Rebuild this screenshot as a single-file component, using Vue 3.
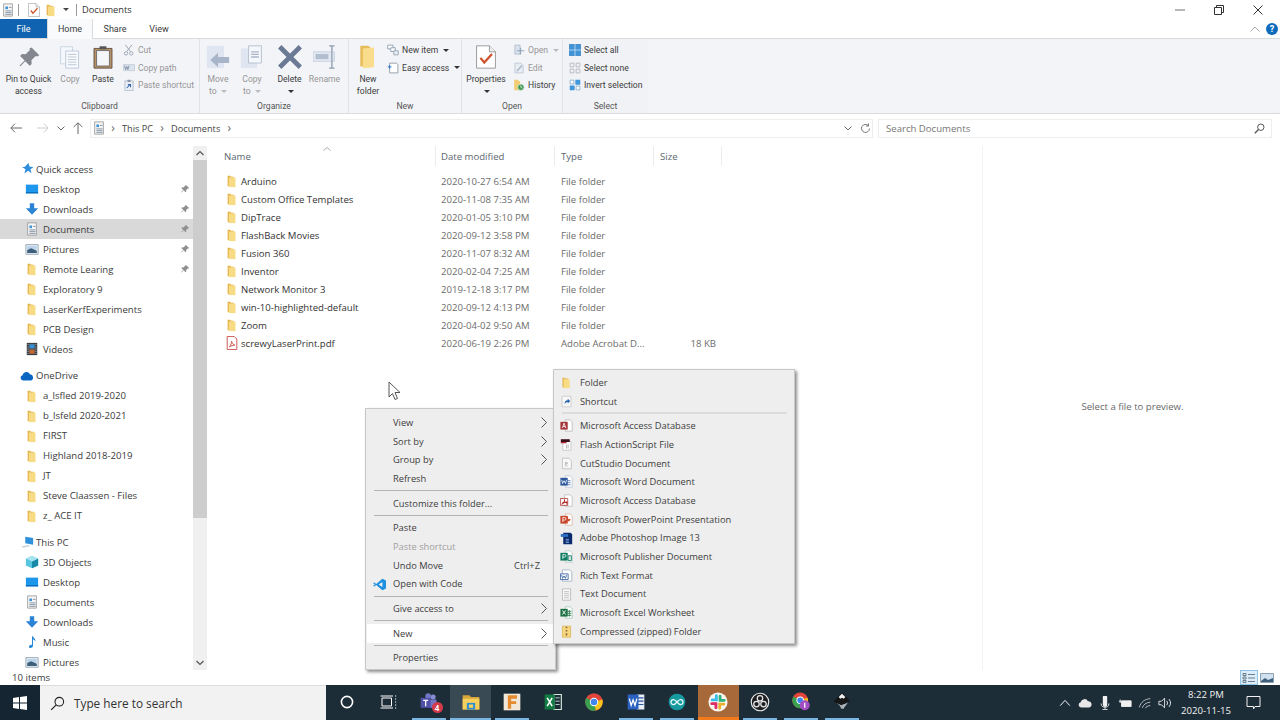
<script setup>
const clipSmall = [
  { icon: 'cut', label: 'Cut' },
  { icon: 'copypath', label: 'Copy path' },
  { icon: 'pasteshort', label: 'Paste shortcut' }
];
const newSmall = [
  { icon: 'newitem', label: 'New item', caret: true },
  { icon: 'easy', label: 'Easy access', caret: true }
];
const openSmall = [
  { icon: 'openfile', label: 'Open', caret: true, off: true },
  { icon: 'edit', label: 'Edit', off: true },
  { icon: 'history', label: 'History' }
];
const selectSmall = [
  { icon: 'selall', label: 'Select all' },
  { icon: 'selnone', label: 'Select none' },
  { icon: 'selinv', label: 'Invert selection' }
];

const navGroups = [
  [
    { label: 'Quick access', icon: 'star', top: true },
    { label: 'Desktop', icon: 'desktop', pin: true },
    { label: 'Downloads', icon: 'down', pin: true },
    { label: 'Documents', icon: 'docs', pin: true, selected: true },
    { label: 'Pictures', icon: 'pics', pin: true },
    { label: 'Remote Learing', icon: 'folder', pin: true },
    { label: 'Exploratory 9', icon: 'folder' },
    { label: 'LaserKerfExperiments', icon: 'folder' },
    { label: 'PCB Design', icon: 'folder' },
    { label: 'Videos', icon: 'film' }
  ],
  [
    { label: 'OneDrive', icon: 'cloud', top: true },
    { label: 'a_lsfled 2019-2020', icon: 'folder' },
    { label: 'b_lsfeld 2020-2021', icon: 'folder' },
    { label: 'FIRST', icon: 'folder' },
    { label: 'Highland 2018-2019', icon: 'folder' },
    { label: 'JT', icon: 'folder' },
    { label: 'Steve Claassen - Files', icon: 'folder' },
    { label: 'z_ ACE IT', icon: 'folder' }
  ],
  [
    { label: 'This PC', icon: 'pc', top: true },
    { label: '3D Objects', icon: 'cube' },
    { label: 'Desktop', icon: 'desktop' },
    { label: 'Documents', icon: 'docs' },
    { label: 'Downloads', icon: 'down' },
    { label: 'Music', icon: 'music' },
    { label: 'Pictures', icon: 'pics' }
  ]
];

const files = [
  { name: 'Arduino', date: '2020-10-27 6:54 AM' },
  { name: 'Custom Office Templates', date: '2020-11-08 7:35 AM' },
  { name: 'DipTrace', date: '2020-01-05 3:10 PM' },
  { name: 'FlashBack Movies', date: '2020-09-12 3:58 PM' },
  { name: 'Fusion 360', date: '2020-11-07 8:32 AM' },
  { name: 'Inventor', date: '2020-02-04 7:25 AM' },
  { name: 'Network Monitor 3', date: '2019-12-18 3:17 PM' },
  { name: 'win-10-highlighted-default', date: '2020-09-12 4:13 PM' },
  { name: 'Zoom', date: '2020-04-02 9:50 AM' },
  { name: 'screwyLaserPrint.pdf', date: '2020-06-19 2:26 PM', type: 'Adobe Acrobat D...', size: '18 KB', icon: 'pdf' }
];

const ctxMenu = [
  { label: 'View', arrow: true },
  { label: 'Sort by', arrow: true },
  { label: 'Group by', arrow: true },
  { label: 'Refresh' },
  { sep: true },
  { label: 'Customize this folder...' },
  { sep: true },
  { label: 'Paste' },
  { label: 'Paste shortcut', off: true },
  { label: 'Undo Move', key: 'Ctrl+Z' },
  { label: 'Open with Code', icon: 'vscode' },
  { sep: true },
  { label: 'Give access to', arrow: true },
  { sep: true },
  { label: 'New', arrow: true, active: true },
  { sep: true },
  { label: 'Properties' }
];

const newMenu = [
  { label: 'Folder', icon: 'folder' },
  { label: 'Shortcut', icon: 'shortcut' },
  { sep: true },
  { label: 'Microsoft Access Database', icon: 'access' },
  { label: 'Flash ActionScript File', icon: 'flash' },
  { label: 'CutStudio Document', icon: 'cutstudio' },
  { label: 'Microsoft Word Document', icon: 'word' },
  { label: 'Microsoft Access Database', icon: 'acrobat' },
  { label: 'Microsoft PowerPoint Presentation', icon: 'ppt' },
  { label: 'Adobe Photoshop Image 13', icon: 'psd' },
  { label: 'Microsoft Publisher Document', icon: 'pub' },
  { label: 'Rich Text Format', icon: 'rtf' },
  { label: 'Text Document', icon: 'txt' },
  { label: 'Microsoft Excel Worksheet', icon: 'xls' },
  { label: 'Compressed (zipped) Folder', icon: 'zip' }
];

const taskApps = [
  { icon: 'tb-cortana' },
  { icon: 'tb-taskview' },
  { icon: 'tb-teams', run: true, badge: '4' },
  { icon: 'tb-explorer', run: true, active: true },
  { icon: 'tb-fusion', run: true },
  { icon: 'tb-excel' },
  { icon: 'tb-chrome' },
  { icon: 'tb-word', run: true },
  { icon: 'tb-arduino', run: true },
  { icon: 'tb-slack', flash: true },
  { icon: 'tb-obs', run: true },
  { icon: 'tb-chrome2', run: true },
  { icon: 'tb-inkscape', run: true }
];

const trayIcons = ['tr-up', 'tr-cloud', 'tr-mic', 'tr-batt', 'tr-wifi', 'tr-vol'];
</script>

<template>
  <div class="desk">
    <!-- icon sprite -->
    <svg class="sprite" aria-hidden="true">
      <symbol id="folder" viewBox="0 0 16 16"><path d="M3 2h3l1 1h3v11H3z" fill="#e6b650"/><path d="M4.500 4H12v11H4.500z" fill="#f8dc85"/></symbol>
      <symbol id="star" viewBox="0 0 16 16"><path d="M9.500 1l1.600 4.400 4.400.3-3.500 2.700 1.200 4.500L9.400 10 5 13l1.300-4.600L2.600 6l-2 .3 5-1z" fill="#2f8fdc"/></symbol>
      <symbol id="desktop" viewBox="0 0 16 16"><path d="M1 3h14v10H1z" fill="#1e96ec"/><path d="M1 11.500h14V13H1z" fill="#0d6cb8"/></symbol>
      <symbol id="down" viewBox="0 0 16 16"><path d="M5.500 1.500h5V7H15l-7 7.500L1 7h4.500z" fill="#2a83d4"/></symbol>
      <symbol id="docs" viewBox="0 0 16 16"><path d="M3 1h10v14H3z" fill="#f6f6f6" stroke="#9a9a9a"/><path d="M5 4h3v3H5z" fill="#3e93d6"/><path d="M9 5h3M5 9h7M5 11h7M5 13h7" stroke="#7a8a9a"/></symbol>
      <symbol id="pics" viewBox="0 0 16 16"><path d="M1 3h14v11H1z" fill="#eef2f6" stroke="#8ea0b0"/><path d="M2.500 4.500h11V9h-11z" fill="#bcd4ea"/><path d="M2.500 12.500V9L7 7l6.500 3v2.500z" fill="#3d5f7c"/></symbol>
      <symbol id="film" viewBox="0 0 16 16"><path d="M2 1h12v14H2z" fill="#3a3f46"/><path d="M5 2.500h6v5H5z" fill="#3f8ed0"/><path d="M5 8.500h6v5H5z" fill="#c06a3a"/><path d="M3 2.500h1v1H3zM3 5h1v1H3zM3 7.500h1v1H3zM3 10h1v1H3zM3 12.500h1v1H3zM12 2.500h1v1h-1zM12 5h1v1h-1zM12 7.500h1v1h-1zM12 10h1v1h-1zM12 12.500h1v1h-1z" fill="#ddd"/></symbol>
      <symbol id="cloud" viewBox="0 0 16 16"><path d="M3.500 13a3 3 0 0 1-.6-5.900A4.500 4.500 0 0 1 11.400 6a3.600 3.600 0 0 1 1.100 7z" fill="#0a64c2"/></symbol>
      <symbol id="pc" viewBox="0 0 16 16"><path d="M6 2l9 1.500V11L6 9.500z" fill="#2f90dc"/><path d="M1 13.500l8-2 3 1-8 2z" fill="#c9d3dc"/></symbol>
      <symbol id="cube" viewBox="0 0 16 16"><path d="M8 1l7 3v8l-7 3-7-3V4z" fill="#58c6de"/><path d="M8 7.500V15l7-3V4z" fill="#1788a8"/><path d="M1 4l7 3.500L15 4 8 1z" fill="#a7e4ef"/></symbol>
      <symbol id="music" viewBox="0 0 16 16"><path d="M8 1.500h1.200c.4 2 3.200 2.800 2.800 6-.6-1.600-1.700-2.300-2.800-2.500V12c0 1.700-1.400 2.800-3 2.800-1 0-1.700-.6-1.700-1.500 0-1.300 1.600-2.400 3.500-2.200z" fill="#2a8ad8"/></symbol>
      <symbol id="pin" viewBox="0 0 16 16"><path d="M9.500 1.500l5 5-1 .8-1-.3-2.700 2.700.2 2.300-1.200 1.100L5.900 10 2.500 13.500l-.6-.6 3.400-3.500-3.100-3 1.100-1.200 2.300.2L8.300 2.700 8.100 2.200z" fill="#8f8f8f"/></symbol>
      <symbol id="pdf" viewBox="0 0 16 16"><path d="M2.500.5h8l3 3v12h-11z" fill="#fff" stroke="#c9453e"/><path d="M5 12.500c2-2 2.500-5 2.500-6.500 1 2.500 2 4 3.800 4.500-2.300 0-4.300.7-6.300 2z" fill="none" stroke="#c9453e"/></symbol>

      <symbol id="bigpin" viewBox="0 0 28 28"><path d="M17 3l9 9-2.400 1.400-1.800-.6-5 5 .3 4.300-2.200 2.200-5.300-5.300L4 24.900l-1-1 5.900-5.900-5.300-5.300 2.200-2.200 4.300.3 5-5-.6-1.800z" fill="#85878e"/></symbol>
      <symbol id="bigcopy" viewBox="0 0 28 28"><path d="M3 2h14v20H3z" fill="#f4f7fb" stroke="#c5d2e2"/><path d="M9 7h15v20H9z" fill="#f8fafd" stroke="#b5c5d8"/><path d="M11.500 11h10M11.500 14h10M11.500 17h10M11.500 20h10M11.500 23h10" stroke="#b4c1d2"/></symbol>
      <symbol id="bigpaste" viewBox="0 0 28 28"><path d="M3.500 4h21v23h-21z" fill="#b69067" stroke="#5a4a3a"/><path d="M6.500 6.500h15v18h-15z" fill="#f4f6fa" stroke="#666"/><path d="M10 1.500h8V5h-8z" fill="#555"/></symbol>
      <symbol id="bigmove" viewBox="0 0 28 28"><path d="M1 1h20v26H1z" fill="#dfe6f2"/><path d="M14 9v5h13v7H14v5L5 17.500z" fill="#a8b5c9"/></symbol>
      <symbol id="bigcopyto" viewBox="0 0 28 28"><path d="M1 4h19v23H1z" fill="#dfe6f2"/><path d="M10 1h15v20H10z" fill="#f4f7fb" stroke="#b0bccd"/><path d="M13 8h9M13 11h9M13 14h9" stroke="#aab6c8" stroke-width="1.500"/></symbol>
      <symbol id="bigdelete" viewBox="0 0 28 28"><path d="M2 2l24 24M26 2L2 26" stroke="#6a7a94" stroke-width="5.500"/></symbol>
      <symbol id="bigrename" viewBox="0 0 28 28"><path d="M0 8h25v11H0z" fill="#e3e9f3" stroke="#c3cede"/><path d="M3 10.500h15v6H3z" fill="#b3bfd0"/><path d="M19 1h6M19 27h6M22 1v26" stroke="#a3aebf" stroke-width="2" fill="none"/></symbol>
      <symbol id="bignew" viewBox="0 0 28 28"><path d="M5 1h9l3 2v22H5z" fill="#e7bd5c"/><path d="M8 4l13-1v23l-13 1z" fill="#f9dd8c"/></symbol>
      <symbol id="bigprops" viewBox="0 0 28 28"><path d="M3 1h15l7 7v19H3z" fill="#fff" stroke="#8c8c8c"/><path d="M18 1v7h7" fill="#eee" stroke="#8c8c8c"/><path d="M7.500 15l4.500 5.500L21 10.500" fill="none" stroke="#d0522a" stroke-width="2.600"/></symbol>

      <symbol id="cut" viewBox="0 0 16 16"><path d="M3 1l7 9M12 1L5 10" stroke="#9aa4b3" stroke-width="1.300"/><circle cx="4" cy="12.500" r="2.300" fill="none" stroke="#9aa4b3" stroke-width="1.200"/><circle cx="11" cy="12.500" r="2.300" fill="none" stroke="#9aa4b3" stroke-width="1.200"/></symbol>
      <symbol id="copypath" viewBox="0 0 16 16"><path d="M.500 3.500h15v8H.500z" fill="#dbe3ef" stroke="#bcc7d6"/><path d="M2 5l1.500 5L5 6l1.500 4L8 5" fill="none" stroke="#6d7b90"/></symbol>
      <symbol id="pasteshort" viewBox="0 0 16 16"><path d="M2.500 2.500h11v13h-11z" fill="#e9eef6" stroke="#a8b4c6"/><path d="M6 1h4v3H6z" fill="#8794a7"/><path d="M5 12l4-4M6.500 7.500H10V11" stroke="#3866ae" stroke-width="1.400" fill="none"/></symbol>
      <symbol id="newitem" viewBox="0 0 16 16"><path d="M1 1.500h7v5H1z" fill="#fff" stroke="#7a8da6"/><path d="M5 5h6v5H5z" fill="#fff" stroke="#7a8da6"/><path d="M9 9h6v5.500H9z" fill="#e8edf3" stroke="#8a98a8"/></symbol>
      <symbol id="easy" viewBox="0 0 16 16"><path d="M3.500 1.500h9l2 2v11h-11z" fill="#fff" stroke="#7c8794"/><path d="M1 6.500h5M3.500 4v5" stroke="#2a78c2" stroke-width="1.300"/></symbol>
      <symbol id="openfile" viewBox="0 0 16 16"><path d="M2.500 1.500h7v12h-7z" fill="#d9e2ee" stroke="#a9b6c7"/><path d="M5 9h10M10 5v9" stroke="#96a7bd" stroke-width="1.600"/></symbol>
      <symbol id="edit" viewBox="0 0 16 16"><path d="M2.500 1.500h8l3 3v10h-11z" fill="#e8edf4" stroke="#b4c0cf"/><path d="M5 11l6-7 1.500 1.200-6 7-2 .5z" fill="#a9b8ca"/></symbol>
      <symbol id="history" viewBox="0 0 16 16"><path d="M1.500 1h5l1 1.500h2V15h-8z" fill="#f2cd72"/><circle cx="10.500" cy="11" r="4.300" fill="#3f9a52" stroke="#eee"/><path d="M10.500 8.500V11l1.800 1.200" stroke="#fff" fill="none"/></symbol>
      <symbol id="selall" viewBox="0 0 16 16"><path d="M.500.500h15v15H.500z" fill="#3f93d6" stroke="#2f7fc0"/><path d="M8 0v16M0 8h16" stroke="#cfe4f5"/></symbol>
      <symbol id="selnone" viewBox="0 0 16 16"><path d="M1.500 1.500h5v5h-5zM9.500 1.500h5v5h-5zM1.500 9.500h5v5h-5zM9.500 9.500h5v5h-5z" fill="none" stroke="#a9aeb6"/></symbol>
      <symbol id="selinv" viewBox="0 0 16 16"><path d="M1.500 1.500h5v5h-5zM9.500 9.500h5v5h-5z" fill="#fff" stroke="#7fa6cc"/><path d="M8.500 1h6.500v6.500H8.500zM1 8.500h6.500V15H1z" fill="#4197da"/></symbol>

      <symbol id="vscode" viewBox="0 0 16 16"><path d="M11.500 1L16 3v10l-4.500 2L4 8.500 1.500 10.500 0 9.700 2.300 8 0 6.300l1.500-.8L4 7.500z" fill="#1f8fe0"/><path d="M11.500 5L7 8l4.500 3z" fill="#eee"/></symbol>
      <symbol id="shortcut" viewBox="0 0 16 16"><path d="M2.500 1.500h11v13h-11z" fill="#f8f8f8" stroke="#c8c8c8"/><path d="M5.500 11.500c0-3 1.500-5 4-5V4.500l3 3-3 3V8.500c-1.500 0-3 1-4 3z" fill="#2361a8"/></symbol>
      <symbol id="access" viewBox="0 0 16 16"><path d="M6.500 1h6l2.500 2.500V15H6.500z" fill="#fff" stroke="#b8b8b8"/><path d="M.500 3.500h9v9.500h-9z" fill="#a4373a"/><path d="M3 11l2-6 2 6M3.700 9.300h2.600" stroke="#fff" fill="none"/></symbol>
      <symbol id="flash" viewBox="0 0 16 16"><path d="M3.500 4h10v11h-10z" fill="#fff" stroke="#c0c0c0"/><path d="M1 1.500h11V5H1z" fill="#3a1116"/><path d="M1 5h7v1.500H1z" fill="#b01a28"/><path d="M8 8v5M10 8v5" stroke="#aaa"/></symbol>
      <symbol id="cutstudio" viewBox="0 0 16 16"><path d="M3 1.500h8l3 3v10H3z" fill="#f8f8f8" stroke="#bdbdbd"/><path d="M6 6h3l1 2-2 1 2 3H9L7 9v3H6z" fill="#c3c3c3"/></symbol>
      <symbol id="word" viewBox="0 0 16 16"><path d="M6.500 1h6l2.500 2.500V15H6.500z" fill="#fff" stroke="#b8c6d8"/><path d="M9 7h4M9 9.500h4M9 12h4" stroke="#4a74b4"/><path d="M.500 3.500h9v9.500h-9z" fill="#2b579a"/><path d="M2 6l1.200 4.500L5 7l1.800 3.500L8 6" stroke="#fff" fill="none"/></symbol>
      <symbol id="acrobat" viewBox="0 0 16 16"><path d="M5.500 1h7l2.500 2.500V15H5.500z" fill="#fff" stroke="#bdbdbd"/><path d="M.500 5.500h9V14h-9z" fill="#fff" stroke="#b63a3a"/><path d="M2 12.500c2-1 4-3.500 3.500-6M3 10.500l5-.5M8.500 9v4" stroke="#b12b2b" stroke-width="1.300" fill="none"/></symbol>
      <symbol id="ppt" viewBox="0 0 16 16"><path d="M6.500 1h6l2.500 2.500V15H6.500z" fill="#fff" stroke="#d6b5a8"/><path d="M10 4.500a3 3 0 1 0 3 3h-3z" fill="#d35230"/><path d="M.500 3.500h9v9.500h-9z" fill="#c8442a"/><path d="M3.500 11V5.500h2.200a1.500 1.500 0 0 1 0 3.200H3.500" stroke="#fff" fill="none"/></symbol>
      <symbol id="psd" viewBox="0 0 16 16"><path d="M4 1h9l2 2v12H4z" fill="#0b2a6c"/><path d="M1 2.500h9V6H1z" fill="#2d6fc2"/><path d="M7 9h4M7 11h4M7 13h4" stroke="#8fb4e8"/></symbol>
      <symbol id="pub" viewBox="0 0 16 16"><path d="M6.500 1h6l2.500 2.500V15H6.500z" fill="#fff" stroke="#b3c9bf"/><path d="M10 7h4v6h-4z" fill="#d8ebe1" stroke="#077568"/><path d="M.500 3.500h9v9.500h-9z" fill="#0e7a5f"/><path d="M3.500 11V5.500h2.200a1.500 1.500 0 0 1 0 3.200H3.500" stroke="#fff" fill="none"/></symbol>
      <symbol id="rtf" viewBox="0 0 16 16"><path d="M3 1h9l2.500 2.500V15H3z" fill="#fff" stroke="#9eb0c6"/><path d="M.500 6h9.500v7H.500z" fill="#fff" stroke="#2b579a"/><path d="M2 7.500l1.200 4L5 8.500l1.800 3L8 7.500" stroke="#2b579a" fill="none"/></symbol>
      <symbol id="txt" viewBox="0 0 16 16"><path d="M3 1h10v14H3z" fill="#f8f8f8" stroke="#b5b5b5"/><path d="M5 4.500h6M5 7h6M5 9.500h6M5 12h6" stroke="#b5b5b5"/></symbol>
      <symbol id="xls" viewBox="0 0 16 16"><path d="M6.500 1h6l2.500 2.500V15H6.500z" fill="#fff" stroke="#a8c6b4"/><path d="M9 6.500h5M9 9h5M9 11.500h5M11.500 5v8" stroke="#217346"/><path d="M.500 3.500h9v9.500h-9z" fill="#1d7044"/><path d="M3 5.500l4 5M7 5.500l-4 5" stroke="#fff" stroke-width="1.200"/></symbol>
      <symbol id="zip" viewBox="0 0 16 16"><path d="M3 1.500h10V15H3z" fill="#f7d77f" stroke="#dcb658"/><path d="M7 2h2v2H7zM7 6h2v2H7zM7 10h2v3H7z" fill="#8a6a32"/></symbol>

      <symbol id="tb-cortana" viewBox="0 0 20 20"><circle cx="10" cy="10" r="5.600" fill="none" stroke="#fff" stroke-width="1.600"/></symbol>
      <symbol id="tb-taskview" viewBox="0 0 20 20"><path d="M4 6h9.500v8H4zM2.500 4h12.500M2.500 16h12.500M17 4h1.200M17 7h1.200M17 10h1.200M17 13h1.200M17 16h1.200" fill="none" stroke="#fff"/></symbol>
      <symbol id="tb-teams" viewBox="0 0 24 24"><circle cx="17" cy="6" r="3" fill="#8b8cd6"/><path d="M12 9h9v7c0 2-2 3-5 3h-4z" fill="#7376c7"/><circle cx="11" cy="5" r="3.400" fill="#7376c7"/><path d="M2 7h12v12H2z" fill="#4f51a8"/><path d="M5 10h6M8 10v7" stroke="#fff" stroke-width="1.600"/></symbol>
      <symbol id="tb-explorer" viewBox="0 0 24 24"><path d="M2 4h8l2 2h10v15H2z" fill="#d8a53a"/><path d="M2 8h20v13H2z" fill="#f7cf5d"/><path d="M7 13h10v8H7z" fill="#2a90d2"/><path d="M9.500 15h5v4h-5z" fill="#f7cf5d"/></symbol>
      <symbol id="tb-fusion" viewBox="0 0 24 24"><path d="M2 2h20v20H2z" fill="#f2e8da"/><path d="M7 4h11v4h-7v3h6v3.500h-6V20H7z" fill="#e58a2e"/></symbol>
      <symbol id="tb-excel" viewBox="0 0 24 24"><path d="M13 3h9v18h-9z" fill="none" stroke="#d5e6db" stroke-width="1.400"/><path d="M15 7h5M15 11h5M15 15h5" stroke="#d5e6db"/><path d="M2 3h12v18H2z" fill="#107c41"/><path d="M5 7l6 10M11 7L5 17" stroke="#fff" stroke-width="1.900"/></symbol>
      <symbol id="tb-chrome" viewBox="0 0 24 24"><circle cx="12" cy="12" r="10.500" fill="#e2463b"/><path d="M12 12L22 9a10.500 10.500 0 0 1-8 13.300z" fill="#f8c31a"/><path d="M12 12l2 10.300A10.500 10.500 0 0 1 2.800 7z" fill="#38a150"/><circle cx="12" cy="12" r="5" fill="#fff"/><circle cx="12" cy="12" r="3.900" fill="#3f86ee"/></symbol>
      <symbol id="tb-chrome2" viewBox="0 0 24 24"><circle cx="11" cy="10" r="9.500" fill="#e2463b"/><path d="M11 10l9-3a9.500 9.500 0 0 1-7 12.200z" fill="#f8c31a"/><path d="M11 10l2 9.200A9.500 9.500 0 0 1 2.700 5.500z" fill="#38a150"/><circle cx="11" cy="10" r="4.500" fill="#fff"/><circle cx="11" cy="10" r="3.400" fill="#3f86ee"/><circle cx="16.500" cy="16" r="6" fill="#a34fc4"/><path d="M16.500 13v6" stroke="#fff" stroke-width="1.500"/></symbol>
      <symbol id="tb-word" viewBox="0 0 24 24"><path d="M13 3h9v18h-9z" fill="#e8eef8"/><path d="M14 7h7M14 11h7M14 15h7" stroke="#2b579a" stroke-width="1.400"/><path d="M2 3h13v18H2z" fill="#2b62c2"/><path d="M4 8l2.200 8L8.500 9.500 10.800 16 13 8" stroke="#fff" stroke-width="1.500" fill="none"/></symbol>
      <symbol id="tb-arduino" viewBox="0 0 24 24"><circle cx="12" cy="12" r="10" fill="#169a9f"/><path d="M12 12c-2-2.500-3-3-4.200-3a3 3 0 0 0 0 6c1.200 0 2.200-.5 4.200-3zm0 0c2-2.500 3-3 4.200-3a3 3 0 0 1 0 6c-1.200 0-2.200-.5-4.200-3z" fill="none" stroke="#e8f8f8" stroke-width="1.500"/></symbol>
      <symbol id="tb-slack" viewBox="0 0 24 24"><circle cx="12" cy="12" r="11.500" fill="#fbf6ef"/><path d="M10 4.500v5h-5" fill="none" stroke="#37bde9" stroke-width="3.400" stroke-linecap="round"/><path d="M19.500 10h-5V5" fill="none" stroke="#2bb179" stroke-width="3.400" stroke-linecap="round"/><path d="M14 19.500v-5h5" fill="none" stroke="#ecb12d" stroke-width="3.400" stroke-linecap="round"/><path d="M4.500 14h5v5" fill="none" stroke="#dd2a62" stroke-width="3.400" stroke-linecap="round"/></symbol>
      <symbol id="tb-obs" viewBox="0 0 24 24"><circle cx="12" cy="12" r="10.500" fill="#1d1d1f" stroke="#e8e8e8" stroke-width="1.400"/><circle cx="12" cy="7.500" r="3.300" fill="none" stroke="#e8e8e8" stroke-width="1.500"/><circle cx="7.800" cy="14.500" r="3.300" fill="none" stroke="#e8e8e8" stroke-width="1.500"/><circle cx="16.200" cy="14.500" r="3.300" fill="none" stroke="#e8e8e8" stroke-width="1.500"/></symbol>
      <symbol id="tb-inkscape" viewBox="0 0 24 24"><path d="M12 1l10 10-5 1-1 3-2-1-1 4-3-3-2 1-6-5z" fill="#141618"/><path d="M12 2l4 4-2 2-2-1-2 1-2-2z" fill="#f2f2f2"/><path d="M5 13c3 2 5 4 6 7h3c1-2 3-4 5-7l-6 2-2 1z" fill="#d0d4d8" opacity=".8"/></symbol>

      <symbol id="tr-up" viewBox="0 0 16 16"><path d="M2.500 11L8 5l5.500 6" fill="none" stroke="#fff" stroke-width="1.100"/></symbol>
      <symbol id="tr-cloud" viewBox="0 0 16 16"><path d="M3.500 13a3 3 0 0 1-.5-5.900A4.500 4.500 0 0 1 11.400 6 3.500 3.500 0 0 1 12.500 13z" fill="#e6e6e6"/></symbol>
      <symbol id="tr-mic" viewBox="0 0 16 16"><path d="M5.500 1.500a2.500 2.500 0 0 1 5 0V10a2.500 2.500 0 0 1-5 0z" fill="#f0f0f0"/><path d="M3.500 8.500c0 6 9 6 9 0M8 13.500V15M5 15.500h6" fill="none" stroke="#f0f0f0"/></symbol>
      <symbol id="tr-batt" viewBox="0 0 16 16"><path d="M4 5.500h11v6.500H4z" fill="#f0f0f0" stroke="#f0f0f0"/><path d="M1 6h3M2.500 4v4" stroke="#f0f0f0"/></symbol>
      <symbol id="tr-wifi" viewBox="0 0 16 16"><path d="M1.500 13C3 7 8 3.500 14 3M5 13.500c1-3.500 4-6 9-6.500M8.500 14c.5-1.500 2.500-3 5.500-3" fill="none" stroke="#c8ccd0"/></symbol>
      <symbol id="tr-vol" viewBox="0 0 16 16"><path d="M1 6h3l3.500-3.500v11L4 10H1z" fill="none" stroke="#f0f0f0"/><path d="M10 5.500a4 4 0 0 1 0 5M12.500 3.500a7 7 0 0 1 0 9" fill="none" stroke="#f0f0f0"/></symbol>
    </svg>

    <div class="titlebar">
      <svg class="ic14"><use href="#docs"/></svg>
      <span class="tsep"></span>
      <svg class="ic14 qa1" viewBox="0 0 28 28"><use href="#bigprops"/></svg>
      <svg class="ic14 qa2"><use href="#folder"/></svg>
      <span class="qa-drop"></span>
      <span class="tsep s2"></span>
      <span class="title">Documents</span>
      <div class="winbtns">
        <svg width="10" height="10" viewBox="0 0 10 10"><path d="M0 5h10" stroke="#999" stroke-width="1.400"/></svg>
        <svg width="10" height="10" viewBox="0 0 10 10"><path d="M.5 2.500h7v7h-7zM2.500 2.500V.5h7v7h-2" fill="none" stroke="#333"/></svg>
        <svg width="10" height="10" viewBox="0 0 10 10"><path d="M.5.5l9 9M9.500.5l-9 9" stroke="#333"/></svg>
      </div>
    </div>

    <div class="tabs">
      <div class="tab file">File</div>
      <div class="tab home">Home</div>
      <div class="tab share">Share</div>
      <div class="tab view">View</div>
      <div class="tab-right">
        <svg width="10" height="6" viewBox="0 0 10 6"><path d="M.5 5.500L5 1l4.500 4.500" fill="none" stroke="#aaa"/></svg>
        <span class="help">?</span>
      </div>
    </div>

    <div class="ribbon">
      <div class="rgroup g-clip">
        <div class="rbody">
          <div class="bigbtn w57"><svg class="bigic"><use href="#bigpin"/></svg><span>Pin to Quick<br>access</span></div>
          <div class="bigbtn w26 off"><svg class="bigic"><use href="#bigcopy"/></svg><span>Copy</span></div>
          <div class="bigbtn w40"><svg class="bigic"><use href="#bigpaste"/></svg><span>Paste</span></div>
          <div class="smallcol">
            <div v-for="s in clipSmall" :key="s.label" class="smallbtn off"><svg class="smic"><use :href="'#' + s.icon"/></svg>{{ s.label }}</div>
          </div>
        </div>
        <div class="rlabel">Clipboard</div>
      </div>
      <div class="rgroup g-org">
        <div class="rbody">
          <div class="bigbtn w34 off"><svg class="bigic"><use href="#bigmove"/></svg><span>Move<br>to <i class="caret light"></i></span></div>
          <div class="bigbtn w34 off"><svg class="bigic"><use href="#bigcopyto"/></svg><span>Copy<br>to <i class="caret light"></i></span></div>
          <div class="bigbtn w37"><svg class="bigic"><use href="#bigdelete"/></svg><span>Delete<br><i class="caret"></i></span></div>
          <div class="bigbtn w33 off"><svg class="bigic"><use href="#bigrename"/></svg><span>Rename</span></div>
        </div>
        <div class="rlabel">Organize</div>
      </div>
      <div class="rgroup g-new">
        <div class="rbody">
          <div class="bigbtn w36"><svg class="bigic"><use href="#bignew"/></svg><span>New<br>folder</span></div>
          <div class="smallcol">
            <div v-for="s in newSmall" :key="s.label" class="smallbtn"><svg class="smic"><use :href="'#' + s.icon"/></svg>{{ s.label }}<i class="caret"></i></div>
          </div>
        </div>
        <div class="rlabel">New</div>
      </div>
      <div class="rgroup g-open">
        <div class="rbody">
          <div class="bigbtn w46"><svg class="bigic"><use href="#bigprops"/></svg><span>Properties<br><i class="caret"></i></span></div>
          <div class="smallcol">
            <div v-for="s in openSmall" :key="s.label" class="smallbtn" :class="{ off: s.off }"><svg class="smic"><use :href="'#' + s.icon"/></svg>{{ s.label }}<i v-if="s.caret" class="caret light"></i></div>
          </div>
        </div>
        <div class="rlabel">Open</div>
      </div>
      <div class="rgroup g-sel">
        <div class="rbody">
          <div class="smallcol">
            <div v-for="s in selectSmall" :key="s.label" class="smallbtn"><svg class="smic"><use :href="'#' + s.icon"/></svg>{{ s.label }}</div>
          </div>
        </div>
        <div class="rlabel">Select</div>
      </div>
    </div>

    <div class="addrbar">
      <div class="navbtns">
        <svg width="12" height="10" viewBox="0 0 12 10"><path d="M12 5H1M5 .7L.8 5 5 9.300" fill="none" stroke="#666"/></svg>
        <svg class="fwd" width="12" height="10" viewBox="0 0 12 10"><path d="M0 5h11M7 .7L11.200 5 7 9.300" fill="none" stroke="#ccc"/></svg>
        <svg class="hist" width="8" height="5" viewBox="0 0 8 5"><path d="M.5.5L4 4 7.500.5" fill="none" stroke="#666"/></svg>
        <svg class="upbtn" width="10" height="12" viewBox="0 0 10 12"><path d="M5 12V1M.7 5L5 .8 9.300 5" fill="none" stroke="#666"/></svg>
      </div>
      <div class="addr">
        <svg class="ic14 addr-ic"><use href="#docs"/></svg>
        <span class="chev">›</span><span class="crumb">This PC</span><span class="chev">›</span><span class="crumb">Documents</span><span class="chev">›</span>
        <span class="addr-fill"></span>
        <svg width="8" height="5" viewBox="0 0 8 5"><path d="M.5.5L4 4 7.500.5" fill="none" stroke="#666"/></svg>
        <svg class="refresh" width="11" height="11" viewBox="0 0 11 11"><path d="M9.500 5.500a4 4 0 1 1-1.200-2.900M8.500.5v2.500H6" fill="none" stroke="#777"/></svg>
      </div>
      <div class="searchbox">
        <span>Search Documents</span>
        <svg width="11" height="11" viewBox="0 0 11 11"><circle cx="6.800" cy="4.200" r="3.200" fill="none" stroke="#555"/><path d="M4.500 6.500L.8 10.200" stroke="#555" stroke-width="1.300"/></svg>
      </div>
    </div>

    <div class="main">
      <div class="nav">
        <div class="navlist">
          <div v-for="(g, gi) in navGroups" :key="gi" class="navgroup">
            <div v-for="n in g" :key="n.label" class="navrow" :class="{ top: n.top, sel: n.selected }">
              <svg class="navic"><use :href="'#' + n.icon"/></svg>
              <span class="navlabel">{{ n.label }}</span>
              <svg v-if="n.pin" class="navpin"><use href="#pin"/></svg>
            </div>
          </div>
        </div>
        <div class="scroll">
          <svg class="sarrow" width="14" height="12" viewBox="0 0 14 12"><path d="M3.500 8L7 4.500 10.500 8" fill="none" stroke="#555" stroke-width="1.200"/></svg>
          <div class="thumb"></div>
          <div class="strack"></div>
          <svg class="sarrow" width="14" height="12" viewBox="0 0 14 12"><path d="M3.500 4L7 7.500 10.500 4" fill="none" stroke="#555" stroke-width="1.200"/></svg>
        </div>
      </div>

      <div class="filelist">
        <div class="fhead">
          <div class="hc hname">Name<svg class="sortmark" width="8" height="4" viewBox="0 0 8 4"><path d="M.5 3.500L4 .5l3.500 3" fill="none" stroke="#aaa"/></svg></div>
          <div class="hc">Date modified</div>
          <div class="hc">Type</div>
          <div class="hc">Size</div>
        </div>
        <div v-for="f in files" :key="f.name" class="frow">
          <div class="fname"><svg class="fic"><use :href="'#' + (f.icon || 'folder')"/></svg>{{ f.name }}</div>
          <div class="fmeta">{{ f.date }}</div>
          <div class="fmeta">{{ f.type || 'File folder' }}</div>
          <div class="fmeta fsize">{{ f.size }}</div>
        </div>
      </div>

      <div class="preview">Select a file to preview.</div>
    </div>

    <div class="status">
      <span>10 items</span>
      <div class="viewbtns">
        <span class="viewbtn on"><svg width="14" height="12" viewBox="0 0 14 12"><path d="M1 1.500h3v2H1zM1 5h3v2H1zM1 8.500h3v2H1zM6 2.500h7M6 6h7M6 9.500h7" fill="none" stroke="#6b7c8c"/></svg></span>
        <span class="viewbtn"><svg width="14" height="12" viewBox="0 0 14 12"><path d="M.5 1.500h13v9H.5z" fill="#cfe0ee" stroke="#8ea0b0"/><path d="M1 9l4-3 3 2 5-2v4H1z" fill="#3d5f7c"/></svg></span>
      </div>
    </div>

    <div class="taskbar">
      <div class="startbtn"><svg width="14" height="14" viewBox="0 0 14 14"><path d="M0 2l6-.9V6.600H0zM7 1l7-1v6.600H7zM0 7.400h6v5.500L0 12zM7 7.400h7V14l-7-1z" fill="#fff"/></svg></div>
      <div class="tsearch">
        <svg width="15" height="15" viewBox="0 0 15 15"><circle cx="9.300" cy="5.700" r="4.300" fill="none" stroke="#222" stroke-width="1.100"/><path d="M6.200 8.800L1.200 13.800" stroke="#222" stroke-width="1.200"/></svg>
        <span>Type here to search</span>
      </div>
      <div v-for="a in taskApps" :key="a.icon" class="tapp" :class="{ run: a.run, act: a.active, flash: a.flash }">
        <svg class="tappic"><use :href="'#' + a.icon"/></svg>
        <span v-if="a.badge" class="tbadge">{{ a.badge }}</span>
      </div>
      <div class="tray">
        <svg v-for="t in trayIcons" :key="t" class="trayic"><use :href="'#' + t"/></svg>
        <div class="clock"><div>8:22 PM</div><div>2020-11-15</div></div>
        <svg class="notif" width="15" height="15" viewBox="0 0 15 15"><path d="M1 1.500h13v10H9l-1.500 2.500V11.500H1z" fill="none" stroke="#f0f0f0"/></svg>
      </div>
    </div>

    <!-- context menus sit over the window -->
    <div class="menu ctx">
      <template v-for="(m, i) in ctxMenu" :key="i">
        <div v-if="m.sep" class="msep"></div>
        <div v-else class="mitem" :class="{ off: m.off, active: m.active }">
          <svg v-if="m.icon" class="micon"><use :href="'#' + m.icon"/></svg>
          <span class="mlabel">{{ m.label }}</span>
          <span v-if="m.key" class="mkey">{{ m.key }}</span>
          <svg v-if="m.arrow" class="marrow" width="6" height="11" viewBox="0 0 6 11"><path d="M.5.5l5 5-5 5" fill="none" stroke="#555"/></svg>
        </div>
      </template>
    </div>
    <div class="menu newm">
      <template v-for="(m, i) in newMenu" :key="i">
        <div v-if="m.sep" class="msep soft"></div>
        <div v-else class="mitem"><svg class="micon"><use :href="'#' + m.icon"/></svg><span class="mlabel">{{ m.label }}</span></div>
      </template>
    </div>
    <svg class="cursor" width="14" height="22" viewBox="0 0 14 22"><path d="M1 1v15l3.500-3.500 2.500 6 2.500-1-2.500-6H12z" fill="#fff" stroke="#555"/></svg>
  </div>
</template>

<style scoped>
.desk {
  position: relative;
  width: 1280px;
  height: 720px;
  overflow: hidden;
  display: flex;
  flex-direction: column;
  background: #fff;
  color: #3b3b3b;
  font-family: "Open Sans", "Noto Sans", sans-serif;
  font-size: 9.6px;
}
.sprite { position: absolute; width: 0; height: 0; }
.ic14 { width: 14px; height: 14px; flex: none; }

.titlebar { height: 19px; display: flex; align-items: center; padding-left: 1px; flex: none; }
.tsep { width: 1px; height: 12px; background: #999; margin: 0 0 0 3px; }
.qa1 { margin-left: 8px; }
.qa2 { margin-left: 3px; }
.qa-drop { width: 0; height: 0; border: 3px solid transparent; border-top: 3px solid #444; border-bottom: 0; margin-left: 5px; }
.tsep.s2 { margin-left: 7px; }
.title { margin-left: 5px; font-size: 9.300px; color: #333; }
.winbtns { margin-left: auto; display: flex; gap: 29px; padding-right: 17px; }

.tabs { height: 19px; display: flex; flex: none; align-items: stretch; position: relative; font-family: Roboto, sans-serif; font-size: 9px; }
.tab { display: flex; align-items: center; justify-content: center; }
.tab.file { width: 47px; background: #0f63b0; color: #fff; }
.tab.home { width: 46px; background: #f9fafc; border-left: 1px solid #dadbdc; border-right: 1px solid #dadbdc; margin-bottom: -1px; z-index: 1; box-sizing: border-box; }
.tab.share { width: 44px; }
.tab.view { width: 44px; }
.tab-right { margin-left: auto; display: flex; align-items: center; gap: 6px; padding-right: 2px; }
.help { width: 12px; height: 12px; border-radius: 50%; background: #0f6cbd; color: #fff; font-size: 9px; font-weight: 700; display: flex; align-items: center; justify-content: center; }

.ribbon { height: 76px; flex: none; box-sizing: border-box; border-top: 1px solid #dadbdc; border-bottom: 1px solid #dadbdc; background: #f3f4f8; display: flex; font-family: Roboto, sans-serif; font-size: 8.600px; }
.rgroup { display: flex; flex-direction: column; border-right: 1px solid #e0e2e6; box-sizing: border-box; }
.g-clip { width: 200px; }
.g-org { width: 149px; }
.g-new { width: 113px; }
.g-open { width: 101px; }
.g-sel { width: 85px; border-right: none; background: #f1f2f6; }
.rbody { height: 60px; display: flex; padding-left: 1px; }
.g-clip .rbody { padding-left: 0; }
.g-sel .rbody { padding-left: 5px; }
.rlabel { flex: 1; display: flex; align-items: center; justify-content: center; color: #555; }
.bigbtn { display: flex; flex-direction: column; align-items: center; text-align: center; padding-top: 4px; line-height: 12px; flex: none; }
.bigbtn span { margin-top: 4px; }
.bigic { width: 24px; height: 24px; flex: none; margin-top: 2px; }
.w57 { width: 57px; }
.w26 { width: 26px; }
.w40 { width: 40px; }
.w34 { width: 34px; }
.w33 { width: 33px; }
.w37 { width: 37px; margin-left: 2px; }
.w36 { width: 36px; }
.w46 { width: 46px; }
.off { color: #969696; }
.caret { display: inline-block; width: 0; height: 0; border: 3px solid transparent; border-top: 3px solid #333; border-bottom: 0; vertical-align: middle; margin-left: 2px; }
.caret.light { border-top-color: #bbb; }
.smallcol { display: flex; flex-direction: column; padding-top: 2.500px; }
.smallbtn { height: 17.500px; display: flex; align-items: center; gap: 3px; white-space: nowrap; }
.smic { width: 12px; height: 12px; flex: none; }
.g-new .smallcol { margin-left: 1px; }
.g-open .smallcol { margin-left: 4px; }
.g-sel .smallcol { margin-left: 1px; }
.g-clip .smallcol { margin-left: 0; }

.addrbar { height: 32px; display: flex; align-items: center; flex: none; padding-bottom: 4px; box-sizing: border-box; }
.navbtns { width: 90px; flex: none; display: flex; align-items: center; padding-left: 10px; box-sizing: border-box; }
.fwd { margin-left: 15px; }
.hist { margin-left: 8px; }
.upbtn { margin-left: 8px; }
.addr { width: 783px; height: 19px; box-sizing: border-box; border: 1px solid #eeeeee; display: flex; align-items: center; padding-left: 1px; flex: none; }
.addr-ic { margin-right: -2px; }
.chev { width: 12px; text-align: center; font-size: 12px; color: #666; margin: 0 3px; line-height: 10px; }
.crumb { font-size: 9.200px; color: #444; }
.addr-fill { flex: 1; }
.refresh { margin: 0 1px 0 8px; }
.searchbox { margin-left: 5px; width: 394px; height: 19px; box-sizing: border-box; border: 1px solid #eeeeee; display: flex; align-items: center; justify-content: space-between; padding: 0 6px 0 7px; color: #777; }

.main { flex: 1; display: flex; min-height: 0; }
.nav { width: 207px; flex: none; display: flex; }
.navlist { flex: 1; padding-top: 13px; overflow: hidden; }
.navgroup { margin-bottom: 6.500px; }
.navrow { height: 20px; display: flex; align-items: center; padding-left: 25px; position: relative; }
.navrow.sel { background: #d9d9d9; }
.navrow.top { padding-left: 20px; }
.navic { width: 14px; height: 14px; flex: none; margin-right: 4px; }
.navrow.top .navic { margin-right: 2px; }
.navpin { width: 10px; height: 10px; margin-left: auto; margin-right: 3px; }
.scroll { width: 14px; display: flex; flex-direction: column; background: #f0f0f0; }
.sarrow { flex: none; margin: 1px 0; }
.thumb { height: 358px; background: #cdcdcd; }
.strack { flex: 1; }

.filelist { width: 776px; flex: none; border-right: 1px solid #f2f2f2; box-sizing: border-box; }
.fhead { height: 20px; display: grid; grid-template-columns: 212px 119px 99px 68px; padding-left: 17px; align-items: stretch; margin-bottom: 6px; color: #5c6670; }
.hc { border-right: 1px solid #ececec; display: flex; align-items: center; padding-left: 6px; }
.hc:nth-child(2) { padding-left: 5px; }
.hname { padding-left: 0; position: relative; }
.sortmark { position: absolute; left: 99px; top: 1px; }
.frow { height: 18px; display: grid; grid-template-columns: 216px 120px 99px 56px; padding-left: 18px; align-items: center; }
.fname { display: flex; align-items: center; white-space: nowrap; color: #333; }
.fic { width: 14px; height: 14px; margin-right: 2px; flex: none; }
.fmeta { color: #6d6d6d; white-space: nowrap; }
.fsize { text-align: right; }
.preview { flex: 1; display: flex; align-items: center; justify-content: center; padding-left: 2px; padding-bottom: 4px; color: #6a6a6a; }

.status { height: 15px; display: flex; align-items: center; justify-content: space-between; padding-left: 12px; flex: none; }
.viewbtns { display: flex; gap: 0; padding-right: 4px; }
.viewbtn { width: 18px; height: 15px; display: flex; align-items: center; justify-content: center; box-sizing: border-box; }
.viewbtn.on { background: #dcecf8; border: 1px solid #8fc4e8; }

.taskbar { height: 35px; flex: none; display: flex; background: #1d2d38; color: #fff; align-items: stretch; }
.startbtn { width: 40px; display: flex; align-items: center; justify-content: center; background: #152531; }
.tsearch { width: 286px; box-sizing: border-box; background: #f2f2f2; color: #333; display: flex; align-items: center; gap: 9px; padding-left: 10px; font-size: 11.800px; border-top: 1px solid #ddd; }
.tapp { width: 41.300px; flex: none; box-sizing: border-box; display: flex; align-items: center; justify-content: center; padding-bottom: 2px; position: relative; }
.tapp.run { background: linear-gradient(#7ab6e2, #7ab6e2) center bottom / 34px 2px no-repeat; }
.tapp.act { background: linear-gradient(#7ab6e2, #7ab6e2) center bottom / 100% 2px no-repeat, #3a4a55; }
.tapp.flash { background: linear-gradient(#f27a1a, #f27a1a) center bottom / 100% 3px no-repeat, #a8693a; }
.tappic { width: 20px; height: 20px; }
.tbadge { position: absolute; left: 23px; top: 17px; width: 11px; height: 11px; border-radius: 50%; background: #d43a4a; color: #fff; font-size: 8px; font-weight: 700; line-height: 11px; text-align: center; }
.tray { margin-left: auto; display: flex; align-items: center; padding-right: 19px; }
.trayic { width: 14px; height: 14px; margin-left: 6px; }
.clock { width: 60px; margin-left: 4px; text-align: center; font-size: 9.600px; line-height: 16px; color: #f2f2f2; }
.notif { margin-left: 10px; }

.menu { position: absolute; background: #eeeeee; border: 1px solid #c8c8c8; box-sizing: border-box; box-shadow: 2px 2px 3px rgba(0, 0, 0, 0.45); }
.ctx { left: 365px; top: 408px; width: 191px; height: 262px; padding: 4px 1px; }
.newm { left: 553px; top: 369px; width: 242px; height: 275px; padding: 3px 1px; }
.mitem { height: 18.700px; display: flex; align-items: center; padding-left: 26px; position: relative; color: #3d3d3d; font-size: 9.300px; }
.mitem.off { color: #a0a0a0; }
.mitem.active { background: #fff; }
.micon { position: absolute; left: 6px; top: 3px; width: 13px; height: 13px; }
.newm .mitem { padding-left: 25px; }
.newm .micon { left: 5px; }
.mkey { margin-left: auto; margin-right: 14px; }
.marrow { margin-left: auto; margin-right: 7px; }
.msep { height: 1px; background: #b4b4b4; margin: 2.500px 0 2.500px 7px; width: 174px; }
.msep.soft { background: #dcdcdc; width: 225px; height: 2px; margin: 2px 0 2px 7px; }
.cursor { position: absolute; left: 388px; top: 381px; }
</style>

<style>
body { overflow: hidden; }
</style>
